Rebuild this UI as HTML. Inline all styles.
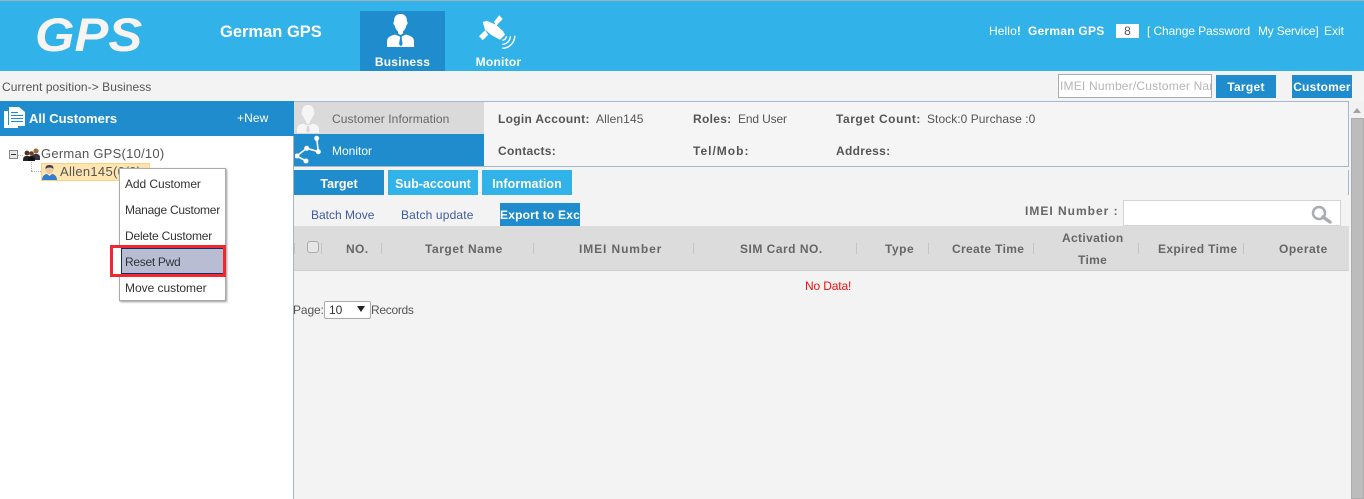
<!DOCTYPE html>
<html><head><meta charset="utf-8"><style>
html,body{margin:0;padding:0}
body{width:1364px;height:499px;position:relative;overflow:hidden;background:#f3f3f3;font-family:"Liberation Sans",sans-serif;font-size:12px;color:#555}
.a{position:absolute;white-space:nowrap}
.b{font-weight:bold}
.w{color:#fff}
.c{text-align:center}
.h{font-weight:bold;color:#666;top:242px;line-height:15px}
.sep{position:absolute;top:243px;width:1px;height:11px;background:#c4c4c4}
.m{left:125px;color:#333;line-height:14px}
</style></head><body>
<div class="a" style="left:0;top:0;width:1364px;height:71px;background:#31b2e8;border-top:1px solid #9fb0b8;box-sizing:border-box"></div>
<div class="a b" style="left:35px;top:6px;font-size:47px;line-height:58px;font-style:italic;color:#f8f4f4;transform:scaleX(1.08);transform-origin:0 0">GPS</div>
<div class="a b w" style="left:220px;top:23px;font-size:16.500px;line-height:19px">German GPS</div>
<div class="a" style="left:360px;top:11px;width:85px;height:60px;background:#1f8dcd"></div>
<svg class="a" style="left:385px;top:13px" width="32" height="36" viewBox="0 0 32 36"><path fill="#fff" d="M15.500 1c4.500 0 6.500 3 6.500 7.500 1 .5.700 3-.5 3.500-.7 3-1.700 5-3.500 6.500v2l-2.500 1.500-2.500-1.500v-2c-1.800-1.500-2.800-3.500-3.500-6.500-1.200-.5-1.500-3-.5-3.500C9 4 11 1 15.500 1zM10 21.500l3.500 1.500h4l3.500-1.500c4 1.500 8 2 8 7V34H2v-5.500c0-5 4-5.500 8-7z"/><path fill="#1f8dcd" d="M14.500 23h2.500l-.4 2 1 6-1.800 2.500-1.800-2.500 1-6z"/></svg>
<div class="a b w c" style="left:360px;top:55px;width:85px;line-height:15px;letter-spacing:.25px">Business</div>
<svg class="a" style="left:477px;top:14px" width="40" height="36" viewBox="0 0 40 36"><g fill="#fff"><path d="M5.700 8L9.700 6.700 19 10.700 26 17 28 20.700 23 25.700 14.700 21.300 8 15.700z"/><path d="M17 7.700L22.300 1.300 25.700 5 19.300 11.700z"/><path d="M2 22.300L8 16.300 11.300 20.700 5.700 26.300z"/></g><g fill="none" stroke="#fff" stroke-width="1.400"><path d="M25.300 26.300a4 4 0 0 0 4-4"/><path d="M25.300 30.300a8 8 0 0 0 8-8"/><path d="M25.300 34.300a12.500 12.500 0 0 0 12.500-12.500"/></g></svg>
<div class="a b w c" style="left:456px;top:55px;width:85px;line-height:15px;letter-spacing:.25px">Monitor</div>
<div class="a w" style="left:989px;top:24px;line-height:15px;letter-spacing:.1px">Hello<b>!</b></div>
<div class="a b w" style="left:1028px;top:24px;line-height:15px;letter-spacing:.25px">German GPS</div>
<div class="a c" style="left:1116px;top:24px;width:23px;height:14px;background:#fff;line-height:15px;color:#555">8</div>
<div class="a w" style="left:1147px;top:24px;line-height:15px;letter-spacing:-.1px">[ Change Password</div>
<div class="a w" style="left:1258px;top:24px;line-height:15px;letter-spacing:-.2px">My Service]</div>
<div class="a w" style="left:1324px;top:24px;line-height:15px">Exit</div>
<div class="a" style="left:2px;top:80px;line-height:15px;letter-spacing:.06px">Current position-&gt; Business</div>
<div class="a" style="left:1058px;top:74px;width:154px;height:24px;box-sizing:border-box;background:#fff;border:1px solid #aaa;color:#b5b5b5;line-height:22px;padding-left:1px;overflow:hidden;letter-spacing:.2px">IMEI Number/Customer Name</div>
<div class="a b w c" style="left:1216px;top:75px;width:60px;height:23px;background:#1f8dcd;line-height:25px;letter-spacing:.3px">Target</div>
<div class="a b w c" style="left:1292px;top:75px;width:60px;height:23px;background:#1f8dcd;line-height:25px;overflow:hidden;letter-spacing:.2px">Customer</div>

<div class="a" style="left:0;top:101px;width:293px;height:398px;background:#fff;border-right:1px solid #a9b3c6"></div>
<div class="a" style="left:0;top:101px;width:294px;height:35px;background:#1f8dcd"></div>
<svg class="a" style="left:4px;top:107px" width="22" height="22" viewBox="0 0 22 22"><path fill="#fff" d="M0 4h4v14h10v3H0z"/><path fill="#fff" d="M5 0h10l6 5v14H5z"/><g fill="#1f8dcd"><path d="M7 5h7v1H7zM7 8h12v1H7zM7 11h12v1H7zM7 14h12v1H7z"/></g></svg>
<div class="a b w" style="left:29px;top:111px;font-size:13px;line-height:15px">All Customers</div>
<div class="a w" style="left:237px;top:111px;line-height:15px;letter-spacing:.1px">+New</div>
<div class="a" style="left:9px;top:150px;width:9px;height:9px;box-sizing:border-box;border:1px solid #888;background:#e8e8e8"><div style="margin:3px 1px 0;height:1px;background:#333"></div></div>
<div class="a" style="left:18px;top:155px;width:5px;border-top:1px dotted #aaa"></div>
<svg class="a" style="left:23px;top:147px" width="17" height="14" viewBox="0 0 17 14"><circle cx="4" cy="6" r="2.400" fill="#553322"/><path d="M0 14c0-4 1-5 4-5s4 1 4 5z" fill="#222"/><circle cx="13" cy="4" r="2.600" fill="#a06a3a"/><path d="M9 11c0-3 1-4 4-4s4 1 4 4v2H9z" fill="#334"/><circle cx="8.500" cy="6.500" r="2.300" fill="#6a3a22"/><path d="M5 14c0-4 1-5 3.500-5s3.500 1 3.500 5z" fill="#111"/></svg>
<div class="a" style="left:41px;top:146px;font-size:13px;line-height:15px;letter-spacing:.25px">German GPS(10/10)</div>
<div class="a" style="left:31px;top:162px;height:9px;border-left:1px dotted #aaa"></div>
<div class="a" style="left:31px;top:171px;width:10px;border-top:1px dotted #aaa"></div>
<div class="a" style="left:41px;top:163px;width:109px;height:18px;box-sizing:border-box;background:#ffe6b0;border:1px solid #ffcf80"></div>
<svg class="a" style="left:42px;top:164px" width="15" height="16" viewBox="0 0 15 16"><path d="M7.500 1c3 0 4 2 4 4s-2 5-4 5-4-3-4-5 1-4 4-4z" fill="#e8c9a8"/><path d="M3.500 5c0-3 1-4 4-4s4 1 4 4c-2-2-6-2-8 0z" fill="#444"/><path d="M0 16c0-4 3-6 5-6l2.500 2 2.500-2c2 0 5 2 5 6z" fill="#2f7fd0"/></svg>
<div class="a" style="left:60px;top:164px;font-size:13px;line-height:15px;letter-spacing:.3px">Allen145(0/0)</div>
<div class="a" style="left:119px;top:168px;width:107px;height:133px;box-sizing:border-box;background:#fff;border:1px solid #aaa;box-shadow:1px 1px 2px #999"></div>
<div class="a m" style="top:177px;letter-spacing:-.07px">Add Customer</div>
<div class="a m" style="top:203px;letter-spacing:-.25px">Manage Customer</div>
<div class="a m" style="top:229px;letter-spacing:-.2px">Delete Customer</div>
<div class="a m" style="top:281px;letter-spacing:-.03px">Move customer</div>
<div class="a" style="left:110px;top:245px;width:116px;height:32px;box-sizing:border-box;border:3px solid #f0282f;background:#fff"></div>
<div class="a" style="left:121px;top:248px;width:102px;height:26px;box-sizing:border-box;background:#b8bdd4;border:1px solid #1c2a6a;border-right:0"></div>
<div class="a m" style="top:255px;letter-spacing:-.3px">Reset Pwd</div>

<div class="a" style="left:294px;top:101px;width:1055px;height:66px;box-sizing:border-box;background:#f5f5f5;border:1px solid #a4b8d4;border-left:0"></div>
<div class="a" style="left:294px;top:102px;width:190px;height:32px;background:#dadada"></div>
<div class="a" style="left:294px;top:134px;width:190px;height:32px;background:#1f8dcd"></div>
<svg class="a" style="left:296px;top:104px" width="24" height="30" viewBox="0 0 24 30"><path fill="#f5f5f5" d="M12 1c4 0 6 3 6 7 1 1 .5 3-1 3.500-.6 2.500-1.500 4-3 5.500v2l-2 1-2-1v-2c-1.500-1.500-2.400-3-3-5.500C5.500 11 5 9 6 8c0-4 2-7 6-7zM7 19.500l3 1.500h4l3-1.500c3.500 1 6 2 6 5.500v4H1v-4c0-3.500 2.500-4.500 6-5.500z"/><path fill="#dadada" d="M11 22h2l1 5-2 2-2-2z"/></svg>
<svg class="a" style="left:295px;top:135px" width="26" height="30" viewBox="0 0 26 30"><path fill="none" stroke="#fff" stroke-width="1.600" d="M11 26L1.700 21 11.700 13.300 23.300 16.700 21.700 3.300"/><g fill="#fff"><circle cx="11" cy="26" r="2.500"/><circle cx="1.900" cy="21" r="2.500"/><circle cx="11.700" cy="13.300" r="2.500"/><circle cx="23.300" cy="16.700" r="2.500"/><circle cx="21.700" cy="3.300" r="2.500"/></g></svg>
<div class="a" style="left:332px;top:112px;line-height:15px;letter-spacing:.1px;color:#666">Customer Information</div>
<div class="a w" style="left:332px;top:144px;line-height:15px">Monitor</div>
<div class="a b" style="left:498px;top:112px;line-height:15px;letter-spacing:.3px">Login Account:</div>
<div class="a" style="left:596px;top:112px;line-height:15px;letter-spacing:.1px">Allen145</div>
<div class="a b" style="left:693px;top:112px;line-height:15px;letter-spacing:.3px">Roles:</div>
<div class="a" style="left:738px;top:112px;line-height:15px;letter-spacing:-.15px">End User</div>
<div class="a b" style="left:836px;top:112px;line-height:15px;letter-spacing:.55px">Target Count:</div>
<div class="a" style="left:927px;top:112px;line-height:15px;letter-spacing:.05px">Stock:0 Purchase :0</div>
<div class="a b" style="left:498px;top:144px;line-height:15px;letter-spacing:.3px">Contacts:</div>
<div class="a b" style="left:693px;top:144px;line-height:15px;letter-spacing:1px">Tel/Mob:</div>
<div class="a b" style="left:836px;top:144px;line-height:15px;letter-spacing:.3px">Address:</div>

<div class="a" style="left:293px;top:136px;width:1px;height:363px;background:#a9b3c6"></div>
<div class="a" style="left:1348px;top:170px;width:1px;height:25px;background:#a4b8d4"></div>
<div class="a b w c" style="left:294px;top:170px;width:90px;height:25px;background:#1f8dcd;line-height:28px;font-size:12.500px">Target</div>
<div class="a b w c" style="left:388px;top:170px;width:90px;height:25px;background:#31b2e8;line-height:28px;font-size:12.500px">Sub-account</div>
<div class="a b w c" style="left:482px;top:170px;width:90px;height:25px;background:#31b2e8;line-height:28px;font-size:12.500px;letter-spacing:.1px">Information</div>
<div class="a" style="left:311px;top:208px;line-height:15px;color:#3f5c9a">Batch Move</div>
<div class="a" style="left:401px;top:208px;line-height:15px;color:#3f5c9a;letter-spacing:.15px">Batch update</div>
<div class="a b w" style="left:500px;top:203px;width:80px;height:23px;background:#1f8dcd;line-height:25px;overflow:hidden;letter-spacing:.2px">Export to Excel</div>
<div class="a b" style="left:1025px;top:204px;line-height:15px;color:#666;letter-spacing:1px">IMEI Number :</div>
<div class="a" style="left:1123px;top:200px;width:218px;height:26px;box-sizing:border-box;background:#fff;border:1px solid #d4d4d4"></div>
<svg class="a" style="left:1310px;top:204px" width="23" height="20" viewBox="0 0 23 20"><circle cx="9" cy="9" r="6" fill="none" stroke="#a9adb3" stroke-width="2.500"/><path d="M13 13l7 5" stroke="#a9adb3" stroke-width="3.500" stroke-linecap="round"/></svg>

<div class="a" style="left:294px;top:226px;width:1055px;height:45px;background:#dcdcdc;border-bottom:1px solid #d0d0d0;box-sizing:border-box"></div>
<div class="a" style="left:307px;top:241px;width:12px;height:12px;box-sizing:border-box;border:1px solid #aaa;border-radius:3px;background:#e6e6e6"></div>
<div class="sep" style="left:294px"></div><div class="sep" style="left:321px"></div><div class="sep" style="left:381px"></div><div class="sep" style="left:533px"></div><div class="sep" style="left:693px"></div><div class="sep" style="left:856px"></div><div class="sep" style="left:928px"></div><div class="sep" style="left:1033px"></div><div class="sep" style="left:1138px"></div><div class="sep" style="left:1243px"></div>
<div class="a h" style="left:346px;letter-spacing:.35px">NO.</div>
<div class="a h" style="left:425px;letter-spacing:.55px">Target Name</div>
<div class="a h" style="left:579px;letter-spacing:.9px">IMEI Number</div>
<div class="a h" style="left:740px;letter-spacing:.5px">SIM Card NO.</div>
<div class="a h" style="left:885px;letter-spacing:.5px">Type</div>
<div class="a h" style="left:952px;letter-spacing:.35px">Create Time</div>
<div class="a h" style="left:1062px;top:231px;letter-spacing:.35px">Activation</div>
<div class="a h" style="left:1078px;top:253px;letter-spacing:.35px">Time</div>
<div class="a h" style="left:1158px;letter-spacing:.35px">Expired Time</div>
<div class="a h" style="left:1279px;letter-spacing:.5px">Operate</div>
<div class="a" style="left:805px;top:279px;line-height:15px;color:#ee1111;letter-spacing:-.15px">No Data!</div>
<div class="a" style="left:293px;top:303px;line-height:15px;letter-spacing:-.1px">Page:</div>
<div class="a" style="left:324px;top:301px;width:47px;height:18px;box-sizing:border-box;background:#fff;border:1px solid #aaa;border-radius:2px;line-height:17px;padding-left:4px;color:#333">10<span style="position:absolute;left:32px;top:4px;width:0;height:0;border:4px solid transparent;border-top:6px solid #222;border-bottom:0"></span></div>
<div class="a" style="left:371px;top:303px;line-height:15px;letter-spacing:-.3px">Records</div>

<div class="a" style="left:1351px;top:101px;width:13px;height:398px;background:#f1f1f1"></div>
<div class="a" style="left:1353px;top:108px;width:0;height:0;border:4px solid transparent;border-bottom:5px solid #a3a3a3;border-top:0"></div>
<div class="a" style="left:1351px;top:118px;width:13px;height:381px;box-sizing:border-box;background:#bcbcbc;border:1px solid #adadad"></div>
</body></html>
